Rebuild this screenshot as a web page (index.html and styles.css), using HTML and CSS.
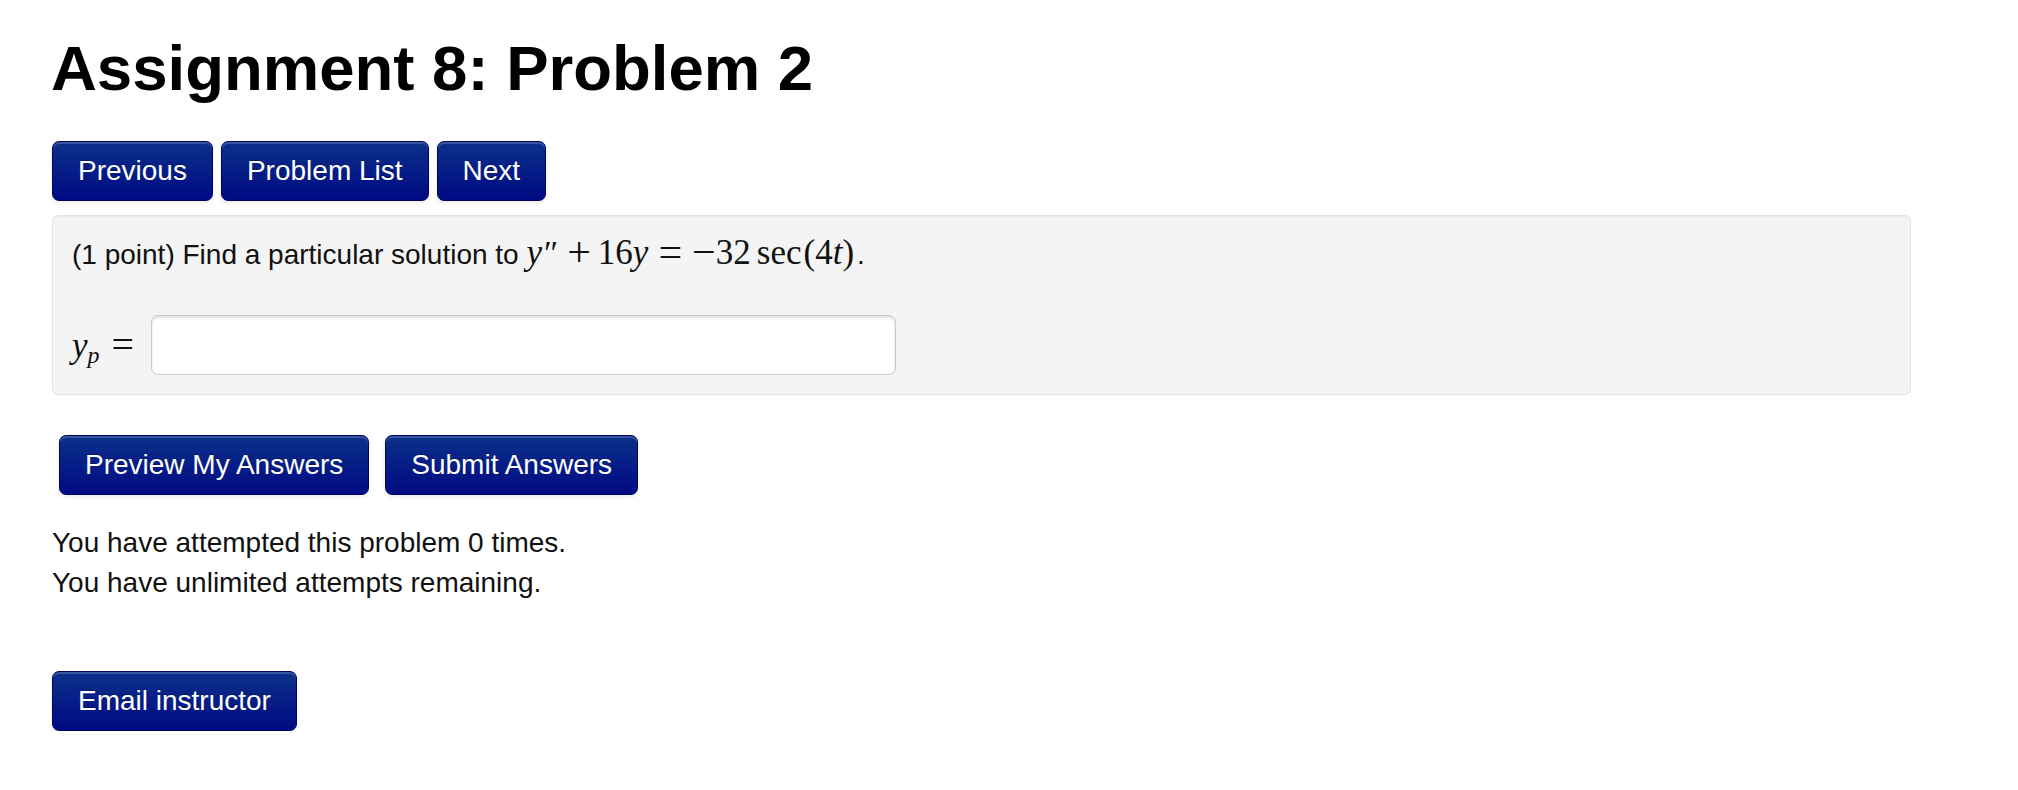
FILE: index.html
```html
<!DOCTYPE html>
<html lang="en">
  <head>
    <meta charset="UTF-8" />
    <meta name="viewport" content="width=device-width, initial-scale=1.0" />
    <title>Assignment 8: Problem 2</title>
    <link rel="stylesheet" href="styles.css">
  </head>
  <body>
    <div class="page">
      <h1 class="title">Assignment 8: Problem 2</h1>
      <div class="nav">
        <a class="btn">Previous</a>
        <a class="btn">Problem List</a>
        <a class="btn">Next</a>
      </div>
      <div class="problem">
        <p class="statement">(1 point) Find a particular solution to <span class="math"><i>y</i><span class="prime">&Prime;</span><span class="op bin">+</span>16<i>y</i><span class="op rel">=</span><span class="op">&minus;</span>32<span class="fn">sec</span>(4<i>t</i>)</span><span class="period">.</span></p>
        <div class="answer-row">
          <span class="math"><i>y</i><sub><i>p</i></sub></span>
          <span class="math eq">=</span>
          <input class="answer" type="text">
        </div>
      </div>
      <div class="submit-row">
        <button class="btn">Preview My Answers</button>
        <button class="btn">Submit Answers</button>
      </div>
      <p class="attempts">You have attempted this problem 0 times.<br>You have unlimited attempts remaining.</p>
      <div class="email-row">
        <button class="btn">Email instructor</button>
      </div>
    </div>
  </body>
</html>
```

FILE: styles.css
```css
* {
  margin: 0;
  padding: 0;
  box-sizing: border-box;
}
body {
  background: #fff;
  color: #111;
  font-family: "Liberation Sans", Arial, sans-serif;
  font-size: 28px;
  line-height: 40px;
}
.page {
  width: 1859px;
  margin-left: 52px;
  padding-top: 33px;
}
.title {
  font-size: 63.5px;
  line-height: 70px;
  font-weight: bold;
  color: #000;
  margin-left: -1px;
}
.nav {
  display: flex;
  gap: 8px;
  margin-top: 38px;
  margin-bottom: 14px;
}
.btn {
  display: inline-block;
  height: 60px;
  padding: 9px 25px;
  border: 1px solid #000563;
  border-radius: 7px;
  background: linear-gradient(to bottom, #0c3189, #000a84);
  box-shadow: inset 0 2px 0 rgba(255, 255, 255, 0.18), 0 2px 4px rgba(0, 0, 0, 0.08);
  color: #fff;
  font-family: "Liberation Sans", Arial, sans-serif;
  font-size: 28px;
  line-height: 40px;
  text-shadow: 0 -1px 0 rgba(0, 0, 0, 0.25);
  white-space: nowrap;
  cursor: pointer;
}
.problem {
  background: #f4f4f4;
  border: 1px solid #e3e3e3;
  border-radius: 6px;
  padding: 19px;
  box-shadow: inset 0 1px 1px rgba(0, 0, 0, 0.04);
}
.statement {
  height: 40px;
  white-space: nowrap;
}
.math {
  font-family: "Liberation Serif", "Times New Roman", serif;
  font-size: 35px;
  line-height: 1;
  color: #111;
}
.math i {
  font-style: italic;
}
.prime {
  font-size: 34px;
  margin-left: 2px;
}
.op {
  display: inline-block;
  font-size: 42px;
  line-height: 0;
  vertical-align: -2px;
}
.bin {
  margin: 0 7px 0 9px;
}
.rel {
  margin: 0 10px;
}
.fn {
  margin-left: 6px;
  margin-right: 2px;
}
.period {
  margin-left: 3px;
}
.answer-row {
  display: flex;
  align-items: center;
  height: 60px;
  margin-top: 40px;
}
.answer-row sub {
  font-size: 24px;
  vertical-align: -6px;
  line-height: 0;
}
.eq {
  margin-left: 12px;
  margin-right: 17px;
  font-size: 40px;
}
.answer {
  width: 745px;
  height: 60px;
  border: 1px solid #c9c9c9;
  border-radius: 7px;
  background: #fff;
  box-shadow: inset 0 2px 3px rgba(0, 0, 0, 0.12);
  font-size: 28px;
  padding: 0 12px;
}
.submit-row {
  display: flex;
  gap: 16px;
  margin-top: 40px;
  margin-left: 7px;
}
.attempts {
  margin-top: 28px;
}
.email-row {
  margin-top: 68px;
}
```
